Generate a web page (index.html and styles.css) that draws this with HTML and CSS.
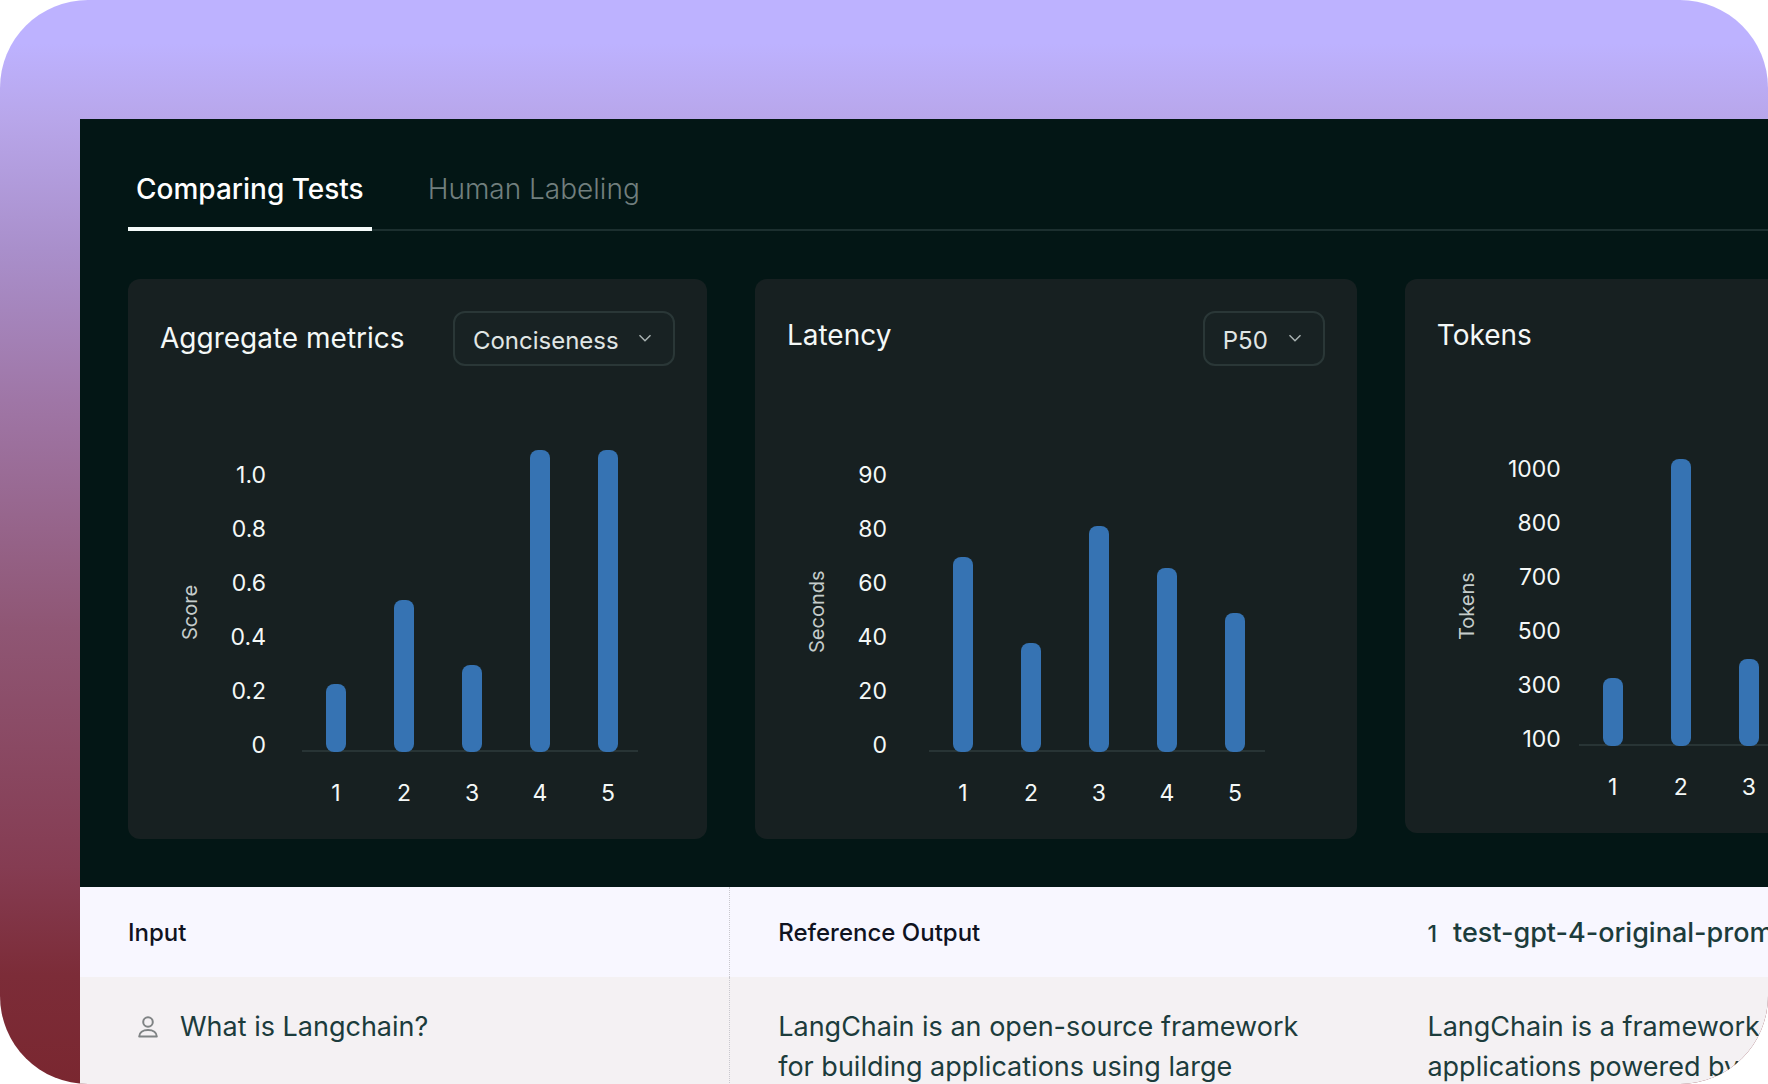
FILE: index.html
```
<!DOCTYPE html>
<html lang="en">
    <head>
        <meta charset="UTF-8">
        <title>Comparing Tests</title>
        <meta name="viewport" content="width=device-width, initial-scale=1.0">
        <link rel="stylesheet" href="styles.css">
    </head>
    <body>
        <main class="stage">
            <div class="panel">
                <section class="dashboard">
                    <nav class="tabs">
                        <a class="tab active" href="#comparing">Comparing Tests</a>
                        <a class="tab" href="#labeling">Human Labeling</a>
                    </nav>
                    <div class="cards">
                        <article class="card">
                            <header class="card-header centered">
                                <h2><label for="metric">Aggregate metrics</label></h2>
                                <div class="dropdown">
                                    <select id="metric">
                                        <option>Conciseness</option>
                                    </select>
                                    <svg viewBox="0 0 14 8"><path d="M1.5 1.2 7 6.7l5.500-5.500"/></svg>
                                </div>
                            </header>
                            <div class="chart decimal">
                                <span class="axis-title">Score</span>
                                <ul class="ticks">
                                    <li>1.0</li>
                                    <li>0.8</li>
                                    <li>0.6</li>
                                    <li>0.4</li>
                                    <li>0.2</li>
                                    <li>0</li>
                                </ul>
                                <div class="plot">
                                    <div class="bars">
                                        <i style="height: 68px"></i>
                                        <i style="height: 152px"></i>
                                        <i style="height: 87px"></i>
                                        <i style="height: 302px"></i>
                                        <i style="height: 302px"></i>
                                    </div>
                                    <ol class="labels">
                                        <li>1</li>
                                        <li>2</li>
                                        <li>3</li>
                                        <li>4</li>
                                        <li>5</li>
                                    </ol>
                                </div>
                            </div>
                        </article>
                        <article class="card">
                            <header class="card-header">
                                <h2><label for="percentile">Latency</label></h2>
                                <div class="dropdown">
                                    <select id="percentile">
                                        <option>P50</option>
                                    </select>
                                    <svg viewBox="0 0 14 8"><path d="M1.5 1.2 7 6.7l5.500-5.500"/></svg>
                                </div>
                            </header>
                            <div class="chart">
                                <span class="axis-title">Seconds</span>
                                <ul class="ticks">
                                    <li>90</li>
                                    <li>80</li>
                                    <li>60</li>
                                    <li>40</li>
                                    <li>20</li>
                                    <li>0</li>
                                </ul>
                                <div class="plot">
                                    <div class="bars">
                                        <i style="height: 195px"></i>
                                        <i style="height: 109px"></i>
                                        <i style="height: 226px"></i>
                                        <i style="height: 184px"></i>
                                        <i style="height: 139px"></i>
                                    </div>
                                    <ol class="labels">
                                        <li>1</li>
                                        <li>2</li>
                                        <li>3</li>
                                        <li>4</li>
                                        <li>5</li>
                                    </ol>
                                </div>
                            </div>
                        </article>
                        <article class="card">
                            <header class="card-header">
                                <h2>Tokens</h2>
                            </header>
                            <div class="chart wide">
                                <span class="axis-title">Tokens</span>
                                <ul class="ticks">
                                    <li>1000</li>
                                    <li>800</li>
                                    <li>700</li>
                                    <li>500</li>
                                    <li>300</li>
                                    <li>100</li>
                                </ul>
                                <div class="plot">
                                    <div class="bars">
                                        <i style="height: 68px"></i>
                                        <i style="height: 287px"></i>
                                        <i style="height: 87px"></i>
                                        <i></i>
                                        <i></i>
                                    </div>
                                    <ol class="labels">
                                        <li>1</li>
                                        <li>2</li>
                                        <li>3</li>
                                        <li></li>
                                        <li></li>
                                    </ol>
                                </div>
                            </div>
                        </article>
                    </div>
                </section>
                <table class="results">
                    <thead>
                        <tr>
                            <th>Input</th>
                            <th>Reference Output</th>
                            <th class="run"><span>1</span>test-gpt-4-original-prom</th>
                        </tr>
                    </thead>
                    <tbody>
                        <tr>
                            <td>
                                <div class="question">
                                    <svg viewBox="0 0 20 22"><circle cx="10" cy="6" r="4.800"/><path d="M1.200 20.500c0-4 3.600-6.600 8.800-6.600s8.800 2.600 8.800 6.600z"/></svg>
                                    What is Langchain?
                                </div>
                            </td>
                            <td>LangChain is an open-source framework<br>for building applications using large</td>
                            <td>LangChain is a framework<br>applications powered by</td>
                        </tr>
                    </tbody>
                </table>
            </div>
        </main>
    </body>
</html>
```
FILE: styles.css
```
*
{
    box-sizing: border-box;
}
body
{
    margin: 0;
    background: #FFFFFF;
    font-family: Inter, sans-serif;
}
h2, ul, ol
{
    margin: 0;
    padding: 0;
    list-style: none;
}

.stage
{
    height: 100vh;
    padding: 119px 0 0 80px;
    overflow: hidden;
    border-radius: 88px;
    background: linear-gradient(#BDB2FF 4%, #B8A6EA 11%, #A98FCB 23%, #9F76A6 37%, #8F5674 58%, #853C52 80%, #7C2C38 90%, #7A2730 100%);
}
.panel
{
    height: 100%;
    overflow: hidden;
    background-color: #F4F1F3;
}
.dashboard
{
    padding: 32px 0 48px 48px;
    background-color: #031615;
}

.tabs
{
    display: flex;
    gap: 48px;
    box-shadow: inset 0 -2px #1C2F2F;
}
.tabs .tab
{
    padding: 20px 8px;
    border-bottom: 4px solid transparent;
    line-height: 36px;
    font-size: 28px;
    font-weight: 300;
    color: #717F7E;
    text-decoration: none;
}
.tabs .active
{
    border-color: #F4FBFA;
    font-weight: 500;
    color: #FFFFFF;
}

.cards
{
    display: grid;
    grid-template-columns: 35.3% 36.7% 36.7%;
    align-items: start;
    gap: 48px;
    margin-top: 48px;
}
.card
{
    padding: 32px;
    border-radius: 12px;
    background-color: #172021;
}
.card-header
{
    display: flex;
    justify-content: space-between;
}
.centered { align-items: center }
.card-header h2
{
    line-height: 49px;
    font-size: 28px;
    font-weight: 400;
    color: #F4F8F7;
}
.dropdown
{
    position: relative;
}
.dropdown select
{
    appearance: none;
    display: block;
    height: 55px;
    padding: 3px 54px 0 18px;
    border: 2px solid #2A3737;
    border-radius: 12px;
    background-color: #182223;
    font-family: inherit;
    font-size: 24px;
    color: #E0E6E5;
}
.dropdown svg
{
    position: absolute;
    top: 23px;
    right: 23px;
    width: 14px;
    height: 8px;
    fill: none;
    stroke: #A9B3B2;
    stroke-width: 1.5;
    pointer-events: none;
}

.chart
{
    display: flex;
    margin-top: 82px;
}
.axis-title
{
    height: 328px;
    width: 28px;
    margin-left: 16px;
    writing-mode: vertical-rl;
    transform: rotate(180deg);
    text-align: center;
    line-height: 28px;
    font-size: 20px;
    color: #C5CCCB;
}
.ticks
{
    width: 56px;
    margin-right: 42px;
    text-align: right;
    line-height: 54px;
    font-size: 23px;
    color: #F4F8F7;
}
.decimal .ticks
{
    width: 62px;
    margin-right: 36px;
}
.wide .ticks
{
    width: 80px;
    margin-right: 18px;
}
.plot
{
    flex: 0 0 340px;
}
.bars
{
    display: flex;
    justify-content: space-around;
    align-items: flex-end;
    height: 304px;
    background: linear-gradient(#283435, #283435) left bottom / 336px 2px no-repeat;
}
.bars i
{
    width: 20px;
    border-radius: 8px;
    background-color: #3673B3;
}
.labels
{
    display: flex;
    margin-top: 27px;
    line-height: 28px;
    font-size: 23px;
    color: #F4F8F7;
}
.labels li
{
    flex: 1;
    text-align: center;
}

.results
{
    width: 115.5%;
    table-layout: fixed;
    border-collapse: collapse;
    text-align: left;
    color: #1C3C3C;
}
.results th
{
    height: 90px;
    padding: 0 0 0 48px;
    background-color: #F8F7FF;
    font-size: 24px;
    font-weight: 500;
    color: #10131F;
}
.results td
{
    padding: 30px 0 0 48px;
    vertical-align: top;
    line-height: 40px;
    font-size: 27px;
    white-space: nowrap;
}
.results th:first-child, .results td:first-child
{
    border-right: 1px dotted #C9C8CE;
}
.results .run
{
    font-size: 27px;
    white-space: nowrap;
    color: #1C3C3C;
}
.results .run span
{
    margin-right: 16px;
    font-size: 23px;
}
.question
{
    display: flex;
    align-items: center;
    gap: 22px;
    padding-left: 10px;
}
.question svg
{
    width: 20px;
    height: 22px;
    fill: none;
    stroke: #7F8384;
    stroke-width: 2;
    stroke-linejoin: round;
}
```
